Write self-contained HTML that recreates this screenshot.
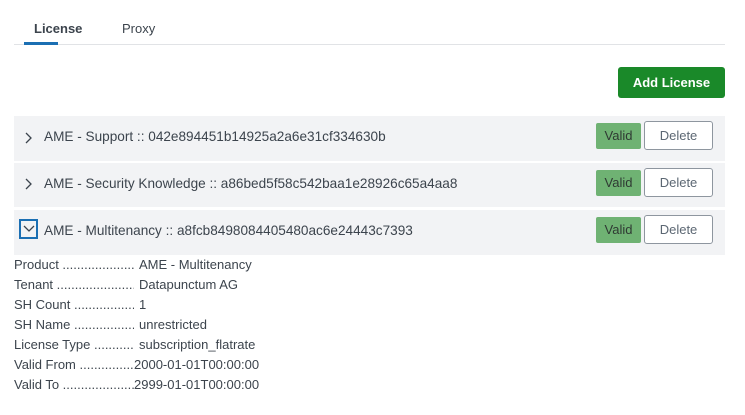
<!DOCTYPE html>
<html><head><style>
body{margin:0;width:745px;height:415px;background:#fff;font-family:"Liberation Sans",sans-serif;color:#3c444d;position:relative;overflow:hidden}
.a{position:absolute}
.tab{font-size:13px;top:21px}
.row{position:absolute;left:14px;width:711px;background:#f2f3f5}
.row .t{position:absolute;left:30px;font-size:13.6px;color:#3c444d}
.valid{position:absolute;left:582px;width:45px;height:26px;background:#6fb273;border-radius:2px;font-size:13px;line-height:26px;text-align:center;color:#2f3a33}
.del{position:absolute;left:630px;width:69px;height:29px;background:#fff;border:1px solid #8e969f;border-radius:3px;box-sizing:border-box;font-size:13px;line-height:27px;text-align:center;color:#5c6773}
.d{position:absolute;left:14px;font-size:13px;color:#3c444d;white-space:pre;height:18px}
.d .l{position:absolute;left:0;top:0;overflow:hidden;white-space:nowrap}
.d .v{position:absolute;top:0}
</style></head><body>
<div class="a tab" style="left:34px;font-weight:bold;color:#3c444d">License</div>
<div class="a tab" style="left:122px;color:#3c444d">Proxy</div>
<div class="a" style="left:14px;top:44px;width:711px;height:1px;background:#e1e3e6"></div>
<div class="a" style="left:24px;top:42px;width:34px;height:3px;background:#1b6fb3"></div>
<div class="a" style="left:618px;top:67px;width:107px;height:31px;background:#1a8929;border-radius:3px;color:#fff;font-weight:bold;font-size:13px;line-height:31px;text-align:center">Add License</div>

<div class="row" style="top:116px;height:45px">
<svg class="a" style="left:9px;top:16px" width="10" height="12"><path d="M3 1 L8 6 L3 11" fill="none" stroke="#3c444d" stroke-width="1.3"/></svg>
<div class="t" style="top:13px">AME - Support :: 042e894451b14925a2a6e31cf334630b</div>
<div class="valid" style="top:7px">Valid</div><div class="del" style="top:5px">Delete</div></div>

<div class="row" style="top:163px;height:44px">
<svg class="a" style="left:9px;top:15px" width="10" height="12"><path d="M3 1 L8 6 L3 11" fill="none" stroke="#3c444d" stroke-width="1.3"/></svg>
<div class="t" style="top:13px">AME - Security Knowledge :: a86bed5f58c542baa1e28926c65a4aa8</div>
<div class="valid" style="top:7px">Valid</div><div class="del" style="top:5px">Delete</div></div>

<div class="row" style="top:210px;height:45px">
<div class="a" style="left:5px;top:9px;width:19px;height:20px;border:2px solid #1b6fb3;box-sizing:border-box"></div>
<svg class="a" style="left:8px;top:14px" width="14" height="10"><path d="M2 2 L7 7 L12 2" fill="none" stroke="#3c444d" stroke-width="1.3"/></svg>
<div class="t" style="top:13px">AME - Multitenancy :: a8fcb8498084405480ac6e24443c7393</div>
<div class="valid" style="top:7px">Valid</div><div class="del" style="top:5px">Delete</div></div>

<div class="d" style="top:257px"><span class="l" style="width:120px">Product ..............................</span><span class="v" style="left:125px">AME - Multitenancy</span></div>
<div class="d" style="top:277px"><span class="l" style="width:120px">Tenant ...............................</span><span class="v" style="left:125px">Datapunctum AG</span></div>
<div class="d" style="top:297px"><span class="l" style="width:120px">SH Count ...........................</span><span class="v" style="left:125px">1</span></div>
<div class="d" style="top:317px"><span class="l" style="width:120px">SH Name ...........................</span><span class="v" style="left:125px">unrestricted</span></div>
<div class="d" style="top:337px"><span class="l" style="width:120px">License Type .......................</span><span class="v" style="left:125px">subscription_flatrate</span></div>
<div class="d" style="top:357px"><span class="l" style="width:120px">Valid From ..........................</span><span class="v" style="left:120px">2000-01-01T00:00:00</span></div>
<div class="d" style="top:377px"><span class="l" style="width:120px">Valid To ..............................</span><span class="v" style="left:120px">2999-01-01T00:00:00</span></div>
</body></html>
